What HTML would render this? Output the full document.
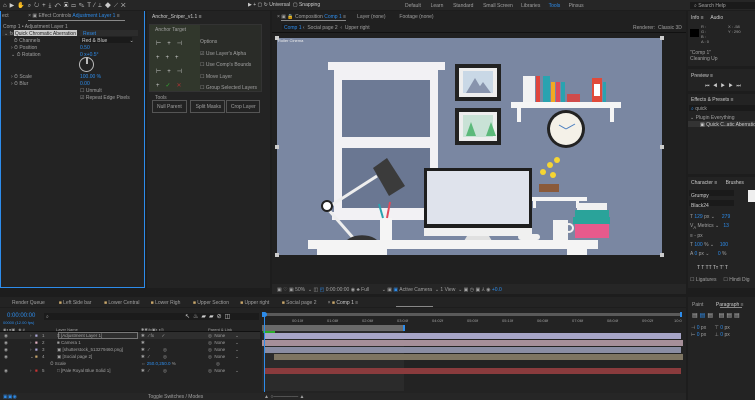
<!DOCTYPE html><html><head><style>
*{margin:0;padding:0;box-sizing:border-box}
body{width:755px;height:400px;background:#1d1d1d;position:relative;overflow:hidden;font-family:"Liberation Sans",sans-serif;font-size:5px;color:#a0a0a0}
div{position:absolute}
.p{background:#232323}
.t{white-space:nowrap}
.b{color:#2d8ceb}
.bar{height:6px}
.r{position:absolute;white-space:nowrap;font-size:4.5px;line-height:6px;height:7px}
.r span{position:absolute;top:0}
</style></head><body>
<!-- top toolbar -->
<div class="p" style="left:0;top:0;width:755px;height:10px;background:#262626"></div>
<div class="t" style="left:3px;top:2px;color:#ccc;font-size:6px;letter-spacing:3px">⌂▶✋⌕↻+⤓↶▣▭✎T⁄⊥◆⟋✕</div>
<div class="t" style="left:248px;top:2px;color:#ccc;font-size:5px">▶ + ▢ ↻ Universal &nbsp;▢ Snapping</div>
<div class="t" style="left:405px;top:3px">Default &nbsp;&nbsp;&nbsp;&nbsp;&nbsp; Learn &nbsp;&nbsp;&nbsp;&nbsp;&nbsp; Standard &nbsp;&nbsp;&nbsp;&nbsp;&nbsp; Small Screen &nbsp;&nbsp;&nbsp;&nbsp; Libraries &nbsp;&nbsp;&nbsp;&nbsp; <span class="b">Tools</span> &nbsp;&nbsp;&nbsp;&nbsp; Pinsus</div>
<div style="left:690px;top:2px;width:65px;height:7px;background:#1a1a1a"></div>
<div class="t" style="left:694px;top:3px">⌕ Search Help</div>

<!-- effect controls -->
<div class="p" style="left:0;top:11px;width:145px;height:277px;border:1px solid #2d8ceb;border-top:none"></div>
<div class="t" style="left:2px;top:13px">ect &nbsp;&nbsp;&nbsp;&nbsp;&nbsp;&nbsp;&nbsp;&nbsp;&nbsp;&nbsp;&nbsp;&nbsp; × ▣ Effect Controls <span class="b">Adjustment Layer 1</span> ≡</div>
<div style="left:28px;top:20px;width:97px;height:1px;background:#888"></div>
<div class="t" style="left:3px;top:24px">Comp 1 • Adjustment Layer 1</div>
<div style="left:2px;top:30px;width:136px;height:6px;background:#2c2c2c"></div>
<div style="left:14px;top:30px;width:63px;height:6px;background:#ccc"></div>
<div class="t" style="left:4px;top:31px">⌄ fx <span style="color:#222">Quick Chromatic Aberration 2</span> &nbsp;<span class="b">Reset</span></div>
<div class="t" style="left:11px;top:38px">&nbsp;&nbsp;⏱ Channels</div>
<div class="t" style="left:11px;top:45px">› ⏱ Position</div>
<div class="t" style="left:11px;top:52px">⌄ ⏱ Rotation</div>
<div class="t" style="left:11px;top:74px">› ⏱ Scale</div>
<div class="t" style="left:11px;top:81px">› ⏱ Blur</div>
<div style="left:80px;top:37px;width:52px;height:6px;background:#1a1a1a"></div>
<div class="t" style="left:82px;top:38px;color:#ccc">Red &amp; Blue &nbsp;&nbsp;&nbsp;&nbsp;&nbsp;&nbsp;&nbsp;&nbsp;&nbsp;&nbsp;&nbsp;&nbsp;&nbsp;&nbsp;&nbsp;⌄</div>
<div class="t b" style="left:80px;top:45px">0.50</div>
<div class="t b" style="left:80px;top:52px">0 x+0.5°</div>
<div class="t b" style="left:80px;top:74px">100.00 %</div>
<div class="t b" style="left:80px;top:81px">0.00</div>
<div style="left:79px;top:57px;width:15px;height:15px;border:1.5px solid #bbb;border-radius:50%"></div>
<div style="left:86px;top:57px;width:1.5px;height:7px;background:#bbb"></div>
<div class="t" style="left:80px;top:88px">☐ Unmult</div>
<div class="t" style="left:80px;top:95px">☑ Repeat Edge Pixels</div>

<!-- anchor snipper -->
<div class="p" style="left:147px;top:11px;width:123px;height:277px"></div>
<div class="t" style="left:152px;top:14px;color:#ccc">Anchor_Sniper_v1.1 ≡</div>
<div style="left:149px;top:24px;width:113px;height:68px;background:#2a2c28;border:1px solid #333"></div>
<div style="left:150px;top:25px;width:50px;height:66px;background:#37402f;opacity:.6"></div>
<div class="t" style="left:155px;top:27px">Anchor Target</div>
<div class="t" style="left:156px;top:37px;line-height:14px;letter-spacing:6px;color:#ccc;font-size:6px">⊢+⊣<br>+++<br>⊢+⊣<br>+<span style="color:#3a3">✓</span><span style="color:#a33">✕</span></div>
<div class="t" style="left:200px;top:37px;line-height:11.5px">Options<br>☑ Use Layer's Alpha<br>☐ Use Comp's Bounds<br>☐ Move Layer<br>☐ Group Selected Layers</div>
<div class="t" style="left:155px;top:95px">Tools</div>
<div style="left:152px;top:100px;width:35px;height:13px;border:1px solid #555"></div>
<div style="left:190px;top:100px;width:35px;height:13px;border:1px solid #555"></div>
<div style="left:226px;top:100px;width:34px;height:13px;border:1px solid #555"></div>
<div class="t" style="left:157px;top:104px">Null Parent &nbsp;&nbsp;&nbsp;&nbsp;&nbsp;&nbsp;&nbsp;&nbsp; Split Masks &nbsp;&nbsp;&nbsp;&nbsp;&nbsp; Crop Layer</div>

<!-- composition -->
<div class="p" style="left:272px;top:11px;width:414px;height:277px;background:#202020"></div>
<div class="t" style="left:277px;top:14px">× ▣ 🔒 Composition <span class="b">Comp 1</span> ≡ &nbsp;&nbsp;&nbsp;&nbsp;&nbsp;&nbsp; Layer (none) &nbsp;&nbsp;&nbsp;&nbsp;&nbsp;&nbsp;&nbsp;&nbsp; Footage (none)</div>
<div style="left:281px;top:20px;width:65px;height:1px;background:#888"></div>
<div style="left:282px;top:24px;width:18px;height:6px;background:#1a1a1a"></div>
<div class="t" style="left:284px;top:25px"><span class="b">Comp 1</span> ‹ &nbsp;Social page 2 &nbsp;‹ &nbsp;Upper right</div>
<div class="t" style="left:633px;top:25px">Renderer: &nbsp;Classic 3D</div>
<div style="left:272px;top:32px;width:414px;height:1px;background:#111"></div>
<svg style="position:absolute;left:277px;top:38px" width="385" height="217" viewBox="0 0 385 217">
<rect width="385" height="217" fill="#7a87a2"/>
<text x="1" y="4" font-size="4" fill="#eee" font-family="Liberation Sans">Roller Cinema</text>
<rect x="51" y="24" width="117" height="8" fill="#f2f1f4"/>
<rect x="57" y="32" width="104" height="148" fill="#f2f1f4"/>
<rect x="65" y="42" width="88" height="57" fill="#6d7a95"/>
<rect x="65" y="110" width="88" height="60" fill="#6a7792"/>
<rect x="55" y="174" width="112" height="8" fill="#f2f1f4"/>
<rect x="178" y="26" width="46" height="37" fill="#222"/><rect x="182" y="30" width="38" height="29" fill="#eee"/><rect x="186" y="33" width="30" height="22" fill="#c9d8e6"/><polygon points="189,55 198,40 207,55" fill="#8894ad"/><polygon points="198,55 206,44 214,55" fill="#8894ad"/>
<rect x="178" y="70" width="46" height="37" fill="#222"/><rect x="182" y="74" width="38" height="29" fill="#eee"/><rect x="186" y="77" width="30" height="22" fill="#c9e2d6"/><polygon points="189,98 194,84 199,98" fill="#5cb97a"/><polygon points="209,98 214,84 219,98" fill="#5cb97a"/>
<rect x="234" y="64" width="110" height="6" fill="#f5f5f5"/><rect x="240" y="70" width="4" height="14" fill="#f5f5f5"/><rect x="333" y="70" width="4" height="14" fill="#f5f5f5"/>
<rect x="246" y="38" width="12" height="26" fill="#f2f2f2"/><rect x="259" y="38" width="4" height="26" fill="#e0453c"/><rect x="266" y="38" width="7" height="26" fill="#29a3b0"/><rect x="274" y="44" width="4" height="20" fill="#f2a922"/><rect x="279" y="44" width="4" height="20" fill="#e04a5a"/><rect x="284" y="44" width="4" height="20" fill="#29a3b0"/><rect x="290" y="56" width="13" height="8" fill="#d04b4b"/><rect x="315" y="40" width="10" height="24" fill="#e04a3a"/><rect x="317" y="46" width="6" height="12" fill="#fff"/><rect x="326" y="44" width="3" height="20" fill="#29a3b0"/>
<circle cx="289" cy="91" r="19" fill="#222"/><circle cx="289" cy="91" r="16" fill="#f4f1e8"/><line x1="289" y1="91" x2="282" y2="87" stroke="#4a7ec0" stroke-width="1"/><line x1="289" y1="91" x2="298" y2="86" stroke="#4a7ec0" stroke-width="1"/>
<rect x="262" y="146" width="20" height="8" fill="#8a5a3a"/><circle cx="266" cy="134" r="3" fill="#f5d533"/><circle cx="273" cy="127" r="3" fill="#f5d533"/><circle cx="280" cy="122" r="3" fill="#f5d533"/><circle cx="276" cy="137" r="3" fill="#f5d533"/>
<rect x="250" y="159" width="60" height="4" fill="#f5f5f5"/><rect x="256" y="163" width="3" height="7" fill="#f5f5f5"/><rect x="299" y="163" width="3" height="7" fill="#f5f5f5"/>
<rect x="147" y="130" width="108" height="60" fill="#1e1e1e"/><rect x="150" y="133" width="102" height="53" fill="#dfe3ec"/><rect x="147" y="190" width="108" height="8" fill="#f0f0f0"/><polygon points="190,198 212,198 218,208 184,208" fill="#e0e0e0"/>
<polygon points="96,130 110,120 128,148 112,158" fill="#3b3b3b"/><line x1="50" y1="170" x2="100" y2="138" stroke="#eee" stroke-width="3"/><line x1="50" y1="170" x2="78" y2="202" stroke="#eee" stroke-width="3"/><circle cx="50" cy="168" r="5" fill="#fff" stroke="#222" stroke-width="2"/><path d="M67,208 a15,9 0 0 1 36,0z" fill="#333"/>
<rect x="103" y="180" width="12" height="22" fill="#f5f5f5"/><line x1="106" y1="180" x2="102" y2="166" stroke="#29a3b0" stroke-width="2"/><line x1="110" y1="180" x2="113" y2="164" stroke="#e04a5a" stroke-width="2"/>
<rect x="276" y="182" width="15" height="20" fill="#f2f2f2"/><circle cx="292" cy="190" r="4" fill="none" stroke="#f2f2f2" stroke-width="2"/>
<rect x="298" y="172" width="34" height="7" fill="#2aa39a"/><rect x="300" y="165" width="30" height="7" fill="#f0f0f0"/><rect x="296" y="179" width="37" height="7" fill="#2aa39a"/><rect x="298" y="186" width="34" height="14" fill="#e75a8c"/>
<rect x="241" y="196" width="22" height="6" rx="3" fill="#f0f0f0"/>
<rect x="31" y="202" width="290" height="9" fill="#f4f4f4"/><rect x="40" y="211" width="70" height="6" fill="#f4f4f4"/><rect x="290" y="211" width="20" height="6" fill="#f4f4f4"/>
</svg>
<div style="left:275px;top:36px;width:4px;height:4px;background:#ccc"></div>
<div style="left:660px;top:36px;width:4px;height:4px;background:#ccc"></div>
<div style="left:275px;top:253px;width:4px;height:4px;background:#ccc"></div>
<div style="left:660px;top:253px;width:4px;height:4px;background:#ccc"></div>
<div style="left:275px;top:145px;width:4px;height:4px;background:#ccc"></div>
<div style="left:660px;top:145px;width:4px;height:4px;background:#ccc"></div>
<div style="left:272px;top:284px;width:414px;height:10px;background:#262626"></div>
<div class="t" style="left:277px;top:287px">▣ ♡ ▣ 50% &nbsp;⌄ ◫ <span class="b">◰</span> 0:00:00:00 ◉ ♣ Full &nbsp;&nbsp;&nbsp;&nbsp;&nbsp;&nbsp;&nbsp;&nbsp;⌄ ▣ <span class="b">▣</span> Active Camera &nbsp;⌄ 1 View &nbsp;⌄ ▣ ◷ ▣ ⅄ ◉ <span class="b">+0.0</span></div>

<!-- right column -->
<div class="p" style="left:688px;top:11px;width:67px;height:55px"></div>
<div class="t" style="left:691px;top:15px;color:#ccc">Info ≡ &nbsp;&nbsp;&nbsp; Audio</div>
<div style="left:690px;top:29px;width:9px;height:8px;background:#000"></div>
<div class="t" style="left:701px;top:24px;line-height:5px;font-size:4px">R :<br>G :<br>B :<br>A : 0</div>
<div class="t" style="left:728px;top:24px;line-height:5px;font-size:4px">X : -58<br>Y : 290</div>
<div class="t" style="left:690px;top:50px;line-height:6px">"Comp 1"<br>Cleaning Up</div>
<div class="p" style="left:688px;top:69px;width:67px;height:22px"></div>
<div class="t" style="left:691px;top:73px;color:#ccc">Preview ≡</div>
<div class="t" style="left:705px;top:83px;color:#ccc;letter-spacing:1px">⏮ ◀ ▶ ▶ ⏭</div>
<div class="p" style="left:688px;top:94px;width:67px;height:80px"></div>
<div class="t" style="left:691px;top:97px;color:#ccc">Effects &amp; Presets ≡</div>
<div style="left:689px;top:105px;width:66px;height:6px;background:#1a1a1a"></div>
<div class="t" style="left:691px;top:106px"><span class="b">⌕</span> quick</div>
<div class="t" style="left:690px;top:115px">⌄ Plugin Everything</div>
<div style="left:688px;top:121px;width:67px;height:6px;background:#333"></div>
<div class="t" style="left:700px;top:122px;color:#ccc">▣ Quick C..atic Aberration</div>
<div class="p" style="left:688px;top:177px;width:67px;height:111px"></div>
<div class="t" style="left:691px;top:180px;color:#ccc">Character ≡ &nbsp;&nbsp;&nbsp;&nbsp; Brushes</div>
<div style="left:689px;top:190px;width:45px;height:6px;background:#1a1a1a"></div>
<div style="left:689px;top:200px;width:45px;height:6px;background:#1a1a1a"></div>
<div class="t" style="left:691px;top:191px;color:#ccc;line-height:10px">Grumpy<br>Black24</div>
<div style="left:748px;top:190px;width:7px;height:12px;background:#eee"></div>
<div class="t" style="left:690px;top:213px;line-height:9px">T <span class="b">129</span> px ⌄ &nbsp;&nbsp;&nbsp;&nbsp;<span class="b">279</span><br>V<sub>A</sub> Metrics ⌄ &nbsp;&nbsp;<span class="b">13</span><br>≡ - px<br>T <span class="b">100</span> % ⌄ &nbsp;&nbsp;&nbsp;<span class="b">100</span><br>A <span class="b">0</span> px ⌄ &nbsp;&nbsp;&nbsp;&nbsp;&nbsp;<span class="b">0</span> %</div>
<div class="t" style="left:697px;top:265px;color:#ccc">T T TT Tт T' T</div>
<div class="t" style="left:690px;top:277px">☐ Ligatures &nbsp;&nbsp;&nbsp; ☐ Hindi Dig</div>

<!-- tab row -->
<div style="left:0;top:297px;width:686px;height:10px;background:#232323"></div>
<div class="t" style="left:12px;top:300px">Render Queue &nbsp;&nbsp;&nbsp;&nbsp;&nbsp;&nbsp;&nbsp;&nbsp;&nbsp;<span style="color:#c9a76b">■</span> Left Side bar &nbsp;&nbsp;&nbsp;&nbsp;&nbsp;&nbsp;&nbsp;&nbsp;<span style="color:#c9a76b">■</span> Lower Central &nbsp;&nbsp;&nbsp;&nbsp;&nbsp;&nbsp;&nbsp;<span style="color:#c9a76b">■</span> Lower Righ &nbsp;&nbsp;&nbsp;&nbsp;&nbsp;&nbsp;&nbsp;&nbsp;<span style="color:#c9a76b">■</span> Upper Section &nbsp;&nbsp;&nbsp;&nbsp;&nbsp;&nbsp;&nbsp;<span style="color:#c9a76b">■</span> Upper right &nbsp;&nbsp;&nbsp;&nbsp;&nbsp;&nbsp;&nbsp;&nbsp;<span style="color:#c9a76b">■</span> Social page 2 &nbsp;&nbsp;&nbsp;&nbsp;&nbsp;&nbsp;&nbsp;× <span style="color:#c9a76b">■</span> <span style="color:#ccc">Comp 1</span> ≡</div>
<div style="left:396px;top:306px;width:37px;height:1px;background:#888"></div>

<!-- timeline -->
<div class="p" style="left:0;top:308px;width:686px;height:85px"></div>
<div class="t b" style="left:7px;top:313px;font-size:6px">0:00:00:00</div>
<div class="t b" style="left:3px;top:320px;font-size:4px">00000 (12.00 fps)</div>
<div style="left:44px;top:313px;width:215px;height:7px;background:#1b1b1b"></div>
<div class="t" style="left:46px;top:314px">⌕</div>
<div class="t" style="left:185px;top:313px;color:#ccc;letter-spacing:3px;font-size:6px">↖♨▰▰⊘◫</div>
<div class="t" style="left:3px;top:327px;font-size:4px">◉◐●▣ &nbsp;&nbsp;◈ #</div>
<div class="t" style="left:56px;top:327px;font-size:4px">Layer Name</div>
<div class="t" style="left:141px;top:327px;font-size:4px">✱✱\fx▣◐◑◎</div>
<div class="t" style="left:208px;top:327px;font-size:4px">Parent &amp; Link</div>
<div style="left:0;top:331px;width:260px;height:1px;background:#111"></div>
<div style="left:0;top:332px;width:260px;height:7px;background:#2e2e2e"></div>
<div style="left:58px;top:332px;width:80px;height:7px;border:1px solid #777"></div>

<div class="r" style="left:0;top:333px;width:260px"><span style="left:4px">◉</span><span style="left:30px">›</span><span style="left:35px;color:#aaa6d6">■</span><span style="left:42px">1</span><span style="left:57px">□ [Adjustment Layer 1]</span><span style="left:141px">✱ &nbsp;&nbsp;⁄ fx &nbsp;&nbsp;&nbsp;&nbsp;&nbsp;✓</span><span style="left:208px">◎ &nbsp;None &nbsp;&nbsp;&nbsp;&nbsp;&nbsp;&nbsp;&nbsp;⌄</span></div>
<div class="r" style="left:0;top:340px;width:260px"><span style="left:4px">◉</span><span style="left:30px">›</span><span style="left:35px;color:#e0b0c0">■</span><span style="left:42px">2</span><span style="left:57px">■ Camera 1</span><span style="left:141px">✱</span><span style="left:208px">◎ &nbsp;None &nbsp;&nbsp;&nbsp;&nbsp;&nbsp;&nbsp;&nbsp;⌄</span></div>
<div class="r" style="left:0;top:347px;width:260px"><span style="left:4px">◉</span><span style="left:30px">›</span><span style="left:35px;color:#aaa6d6">■</span><span style="left:42px">3</span><span style="left:57px">▣ [shutterstock_513279460.png]</span><span style="left:141px">✱ &nbsp;&nbsp;⁄ &nbsp;&nbsp;&nbsp;&nbsp;&nbsp;&nbsp;&nbsp;&nbsp;&nbsp;&nbsp;◎</span><span style="left:208px">◎ &nbsp;None &nbsp;&nbsp;&nbsp;&nbsp;&nbsp;&nbsp;&nbsp;⌄</span></div>
<div class="r" style="left:0;top:354px;width:260px"><span style="left:4px">◉</span><span style="left:30px">⌄</span><span style="left:35px;color:#c9a76b">■</span><span style="left:42px">4</span><span style="left:57px">▣ [Social page 2]</span><span style="left:141px">✱ &nbsp;&nbsp;⁄ &nbsp;&nbsp;&nbsp;&nbsp;&nbsp;&nbsp;&nbsp;&nbsp;&nbsp;&nbsp;◎</span><span style="left:208px">◎ &nbsp;None &nbsp;&nbsp;&nbsp;&nbsp;&nbsp;&nbsp;&nbsp;⌄</span></div>
<div class="r" style="left:0;top:361px;width:260px"><span style="left:50px">⏱ Scale</span><span style="left:141px">⇔ <span class="b" style="position:static">250.0,250.0</span> %</span><span style="left:216px">◎</span></div>
<div class="r" style="left:0;top:368px;width:260px"><span style="left:4px">◉</span><span style="left:30px">›</span><span style="left:35px;color:#cc3333">■</span><span style="left:42px">5</span><span style="left:57px">□ [Pale Royal Blue Solid 1]</span><span style="left:141px">✱ &nbsp;&nbsp;⁄ &nbsp;&nbsp;&nbsp;&nbsp;&nbsp;&nbsp;&nbsp;&nbsp;&nbsp;&nbsp;◎</span><span style="left:208px">◎ &nbsp;None &nbsp;&nbsp;&nbsp;&nbsp;&nbsp;&nbsp;&nbsp;⌄</span></div>

<!-- time ruler -->
<div style="left:262px;top:313px;width:420px;height:3px;background:#5a5a5a"></div>
<div style="left:262px;top:312px;width:2px;height:5px;background:#2d8ceb"></div>
<div style="left:680px;top:312px;width:2px;height:5px;background:#2d8ceb"></div>
<div class="t" style="left:262px;top:318px;font-size:4px">
<span style="position:absolute;left:30px">00:10f</span><span style="position:absolute;left:65px">01:08f</span><span style="position:absolute;left:100px">02:06f</span><span style="position:absolute;left:135px">03:04f</span><span style="position:absolute;left:170px">04:02f</span><span style="position:absolute;left:205px">05:00f</span><span style="position:absolute;left:240px">05:10f</span><span style="position:absolute;left:275px">06:08f</span><span style="position:absolute;left:310px">07:06f</span><span style="position:absolute;left:345px">08:04f</span><span style="position:absolute;left:380px">09:02f</span><span style="position:absolute;left:412px">10:0</span></div>
<div style="left:262px;top:325px;width:142px;height:6px;background:#6a6a6a"></div>
<div style="left:403px;top:325px;width:1.5px;height:6px;background:#2d8ceb"></div>
<div style="left:263px;top:331px;width:12px;height:1.5px;background:#2a2"></div>
<div style="left:262px;top:331px;width:142px;height:60px;background:rgba(255,255,255,.04)"></div>
<div class="bar" style="left:264px;top:333px;width:417px;background:#a7a5c7"></div>
<div class="bar" style="left:262px;top:340px;width:421px;background:#a68f99"></div>
<div class="bar" style="left:264px;top:347px;width:417px;background:#8a8da3"></div>
<div class="bar" style="left:274px;top:354px;width:409px;background:#7e7562"></div>
<div class="bar" style="left:264px;top:368px;width:417px;background:#8a3b3d"></div>
<div style="left:264px;top:312px;width:1px;height:80px;background:#2d8ceb"></div>
<div style="left:262px;top:312px;width:5px;height:5px;border-radius:50%;background:#2d8ceb"></div>
<div style="left:0;top:393px;width:686px;height:7px;background:#262626"></div>
<div class="t b" style="left:3px;top:394px">▣▣◉</div>
<div class="t" style="left:148px;top:394px">Toggle Switches / Modes</div>
<div class="t" style="left:264px;top:394px">▲ ○─────── ▲</div>
<!-- paragraph panel -->
<div class="p" style="left:688px;top:297px;width:67px;height:103px"></div>
<div class="t" style="left:692px;top:302px">Paint &nbsp;&nbsp;&nbsp;&nbsp;&nbsp;&nbsp;&nbsp; <span style="color:#ccc">Paragraph</span> ≡</div>
<div style="left:720px;top:307px;width:22px;height:1px;background:#888"></div>
<div class="t" style="left:692px;top:312px;color:#bbb;letter-spacing:2px;font-size:6px">▤<span class="b">▤</span>▤ ▤▤▤</div>
<div class="t" style="left:691px;top:325px;line-height:7px">⊣ <span class="b">0</span> px &nbsp;&nbsp;&nbsp;&nbsp; ⊤ <span class="b">0</span> px<br>⊢ <span class="b">0</span> px &nbsp;&nbsp;&nbsp;&nbsp; ⊥ <span class="b">0</span> px</div>
</body></html>
